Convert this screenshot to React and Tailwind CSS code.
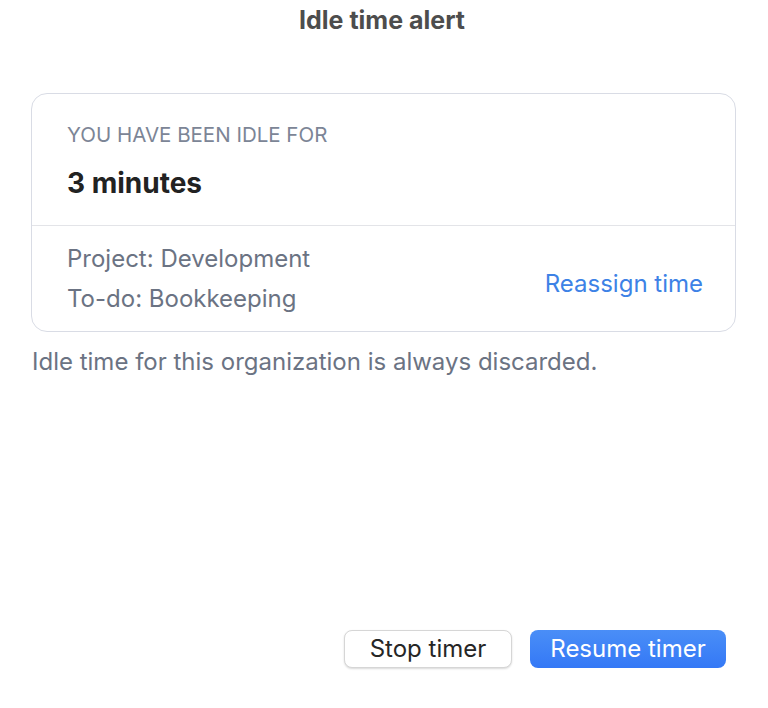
export default function App() {
  return (
    <div className="w-[768px] h-[708px] bg-white flex flex-col" style={{ fontFamily: "Inter, 'Noto Sans', sans-serif" }}>
      <div className="h-[42px] flex items-center justify-center pr-[4px] text-[25px] font-bold text-[#4d4d4d]">
        Idle time alert
      </div>
      <div className="ml-[31px] mt-[51px] w-[705px] h-[239px] border border-[#d9dce5] rounded-[16px] flex flex-col">
        <div className="h-[132px] px-[35px] pt-[30px] border-b border-[#e3e4e8]">
          <div className="text-[20.5px] leading-[22px] text-[#7c8596] uppercase">You have been idle for</div>
          <div className="mt-[22px] text-[28px] leading-[30px] font-bold text-[#222]">3 minutes</div>
        </div>
        <div className="flex-1 pl-[35px] pr-[32px] flex items-center justify-between">
          <div className="flex flex-col gap-[14px] text-[24px] leading-[26px] text-[#6b7383]">
            <div>Project: Development</div>
            <div>To-do: Bookkeeping</div>
          </div>
          <div className="mt-[10px] text-[24px] leading-[26px] text-[#3d82e6]">Reassign time</div>
        </div>
      </div>
      <div className="ml-[32px] mt-[17px] text-[24px] leading-[26px] text-[#6b7383]">
        Idle time for this organization is always discarded.
      </div>
      <div className="flex-1" />
      <div className="flex justify-end gap-[18px] pr-[42px] pb-[40px]">
        <button className="w-[168px] h-[38px] rounded-[8px] bg-white border border-[#d6d6d6] shadow-[0_1px_2px_rgba(0,0,0,0.15)] text-[24px] text-[#262626]">
          Stop timer
        </button>
        <button className="w-[196px] h-[38px] rounded-[8px] bg-gradient-to-b from-[#4a8ef7] to-[#3478f6] text-[24px] text-white">
          Resume timer
        </button>
      </div>
    </div>
  );
}
